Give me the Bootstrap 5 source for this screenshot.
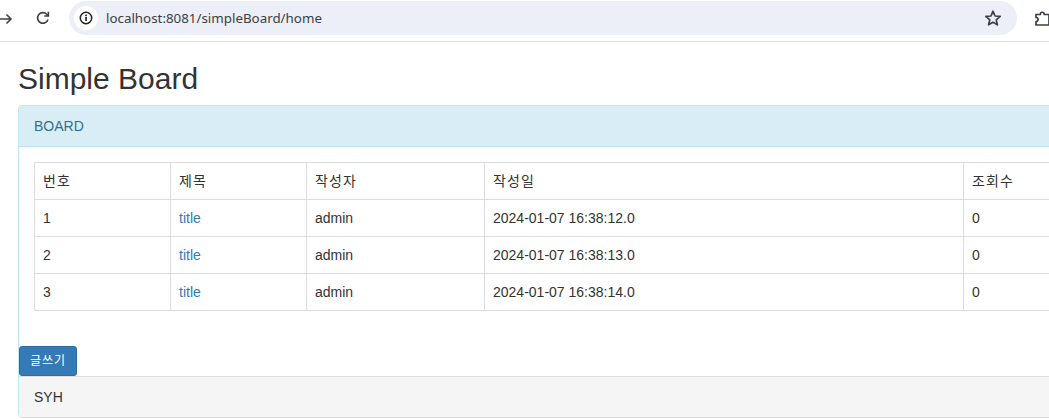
<!DOCTYPE html>
<html lang="ko">
<head>
<meta charset="utf-8">
<title>Simple Board</title>
<link href="https://cdn.jsdelivr.net/npm/bootstrap@5.3.0/dist/css/bootstrap.min.css" rel="stylesheet">
<style>
html,body{height:100%;overflow:hidden;background:#fff}
body{font-family:"Liberation Sans","Noto Sans CJK KR",sans-serif;font-size:14px;line-height:20px;color:#333}
.chrome-bar{height:42px;border-bottom:1px solid #dfe1e5;width:1049px;overflow:hidden;background:#fff}
.omni{flex:none;height:34px;width:948px;margin-left:18px;margin-top:1px;background:#eceff7;border-radius:17px;padding:0 15px 0 5px;font-family:"Noto Sans",sans-serif;font-size:13.35px;color:#3c4043}
.site-chip{width:24px;height:24px;border-radius:50%;background:#fff;margin-right:8px}
.tool-ic{flex:none;display:block}
.ic-back{margin:10px 0 0 -4px}
.ic-reload{margin:10px 0 0 21px}
.ic-ext{margin:9px 0 0 17px}
.page-wrap{width:1115px;margin-left:18px}
.board-title{font-size:30px;line-height:33px;font-weight:500;margin:20px 0 10px;color:#333;font-family:"Liberation Sans",sans-serif}
.board-panel{border:1px solid #bce8f1;border-radius:4px;background:#fff}
.board-head{height:41px;padding:10px 15px;background:#d9edf7;border-bottom:1px solid #bce8f1;color:#31708f;border-radius:3px 3px 0 0}
.board-body{padding:15px 15px 0}
.board-table{width:1065px;table-layout:fixed;border-collapse:collapse;margin-bottom:35px}
.board-table th,.board-table td{border:1px solid #ddd;padding:8px;height:37px;font-weight:400;color:#333;vertical-align:top;line-height:20px}
.board-table th{letter-spacing:1.1px}
.board-table a{color:#337ab7;text-decoration:none}
.col-a,.col-b,.col-e{width:136px}
.col-c{width:178px}
.col-d{width:479px}
.write-btn{display:block;width:58px;height:30px;background:#337ab7;border:1px solid #2e6da4;border-radius:3px;color:#fff;font-size:12px;line-height:18px;padding:5px 0;margin:0;text-align:center;white-space:nowrap;letter-spacing:1px;text-decoration:none}
.write-btn:hover{background:#286090;color:#fff}
.board-foot{height:41px;padding:10px 15px;background:#f5f5f5;border-top:1px solid #ddd;border-radius:0 0 3px 3px;color:#333}
</style>
</head>
<body>
<div class="chrome-bar d-flex align-items-start">
  <svg class="tool-ic ic-back" width="18" height="18" viewBox="0 0 18 18" fill="none" stroke="#3c4043" stroke-width="1.6"><path d="M4 9H15M10.5 4.500 15 9l-4.500 4.500"/></svg>
  <svg class="tool-ic ic-reload" width="16" height="16" viewBox="0 0 16 16" fill="none" stroke="#3c4043" stroke-width="1.6"><path d="M13 9.500A5.300 5.300 0 1 1 11.700 4.200L13 5.600"/><path d="M13.400 1.800V6H9.200"/></svg>
  <div class="omni d-flex align-items-center">
    <span class="site-chip d-flex align-items-center justify-content-center">
      <svg width="14" height="14" viewBox="0 0 14 14"><circle cx="7" cy="7" r="5.700" fill="none" stroke="#202124" stroke-width="1.500"/><rect x="6.200" y="6" width="1.700" height="4" fill="#202124"/><rect x="6.200" y="3.600" width="1.700" height="1.600" fill="#202124"/></svg>
    </span>
    <span class="flex-grow-1">localhost:8081/simpleBoard/home</span>
    <svg class="tool-ic" width="18" height="18" viewBox="0 0 18 18" fill="none" stroke="#3c4043" stroke-width="1.700" stroke-linejoin="round"><path d="M9 2.200 11 7l5.200.4-4 3.400 1.200 5L9 13.200 4.600 15.800l1.200-5-4-3.400L7 7z"/></svg>
  </div>
  <svg class="tool-ic ic-ext" width="18" height="18" viewBox="0 0 18 18" fill="none" stroke="#3c4043" stroke-width="1.700" stroke-linejoin="round"><path d="M2 5.500H6.300C6.300 2.500 10.200 2.500 10.200 5.500H15V16H2V12.500C4.800 12.500 4.800 8.500 2 8.500Z"/></svg>
</div>
<div class="page-wrap">
  <h2 class="board-title">Simple Board</h2>
  <div class="board-panel">
    <div class="board-head">BOARD</div>
    <div class="board-body">
      <table class="board-table">
        <colgroup><col class="col-a"><col class="col-b"><col class="col-c"><col class="col-d"><col class="col-e"></colgroup>
        <thead><tr><th>번호</th><th>제목</th><th>작성자</th><th>작성일</th><th>조회수</th></tr></thead>
        <tbody>
          <tr><td>1</td><td><a href="#">title</a></td><td>admin</td><td>2024-01-07 16:38:12.0</td><td>0</td></tr>
          <tr><td>2</td><td><a href="#">title</a></td><td>admin</td><td>2024-01-07 16:38:13.0</td><td>0</td></tr>
          <tr><td>3</td><td><a href="#">title</a></td><td>admin</td><td>2024-01-07 16:38:14.0</td><td>0</td></tr>
        </tbody>
      </table>
    </div>
    <a class="write-btn" href="#">글쓰기</a>
    <div class="board-foot">SYH</div>
  </div>
</div>
<script src="https://cdn.jsdelivr.net/npm/bootstrap@5.3.0/dist/js/bootstrap.bundle.min.js"></script>
</body>
</html>
